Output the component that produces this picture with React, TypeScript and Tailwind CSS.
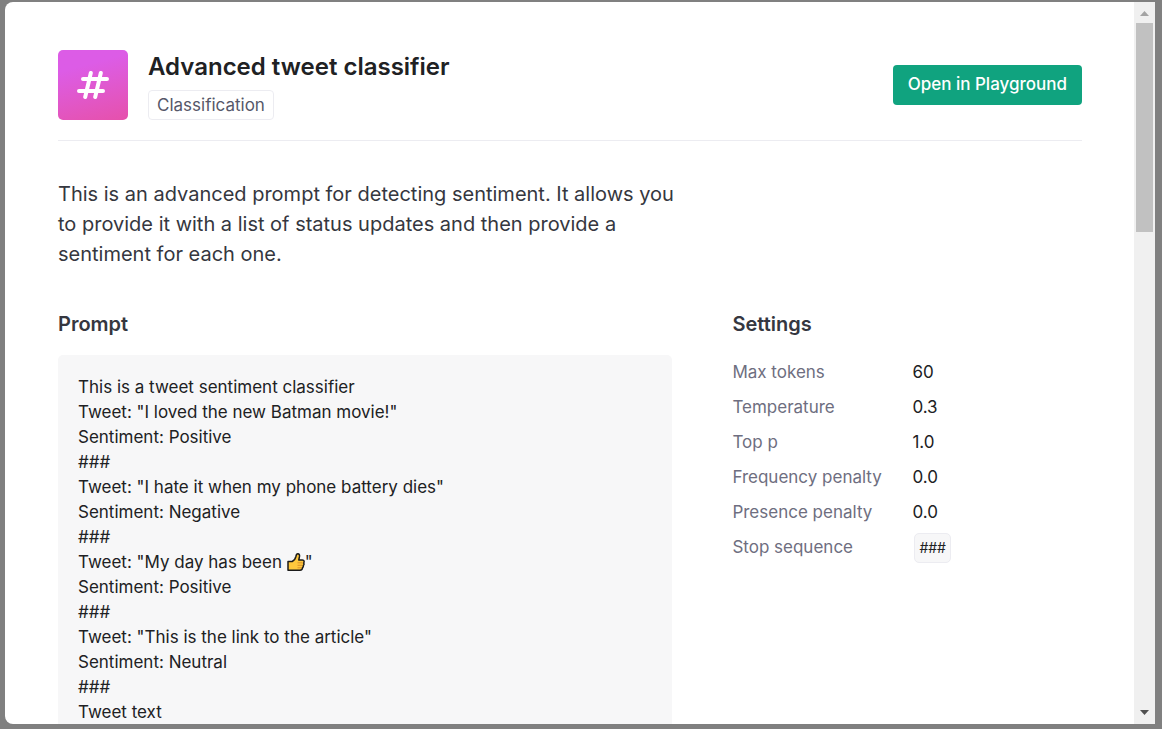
import React from "react";

const promptStart = [
  "This is a tweet sentiment classifier",
  'Tweet: "I loved the new Batman movie!"',
  "Sentiment: Positive",
  "###",
  'Tweet: "I hate it when my phone battery dies"',
  "Sentiment: Negative",
  "###",
];

const promptEnd = [
  "Sentiment: Positive",
  "###",
  'Tweet: "This is the link to the article"',
  "Sentiment: Neutral",
  "###",
  "Tweet text",
];

const settings = [
  ["Max tokens", "60"],
  ["Temperature", "0.3"],
  ["Top p", "1.0"],
  ["Frequency penalty", "0.0"],
  ["Presence penalty", "0.0"],
];

function HashIcon() {
  return (
    <svg viewBox="0 0 32 28" className="h-7 w-8" fill="none" stroke="#fff" strokeWidth="4" strokeLinecap="round" aria-hidden="true">
      <path d="M6 8H30M2 20H26M13.8 2L8.2 26M23.8 2L18.2 26" />
    </svg>
  );
}

function ThumbsUp() {
  return (
    <svg viewBox="0 0 18 18" className="inline size-[18px] align-[-3px]" role="img" aria-label="thumbs up">
      <path
        d="M1 8.5H5.2C7.2 7.4 8.6 5.5 9 3.2C9.2 1.6 9.8.8 10.9.8C12.3.8 12.7 2 12.5 3.4L11.8 7H15.3C16.5 7 17.2 7.8 17.1 8.8C17.1 9.4 16.9 9.8 16.6 10C17 10.4 17.1 11 16.9 11.6C16.8 12 16.5 12.3 16.2 12.5C16.5 13.5 16.2 14.2 15.5 14.6C15.5 16.2 14.6 17.2 13 17.2H1Z"
        fill="#ffc83d"
        stroke="#1b1b1b"
        strokeWidth="1.5"
        strokeLinejoin="round"
      />
      <path d="M10.5 9.8H15.5M10.5 12.3H15.3M10.5 14.8H14.5" stroke="#d9912b" strokeWidth="1" />
    </svg>
  );
}

function ScrollRail() {
  return (
    <div className="flex w-[21px] shrink-0 flex-col items-center bg-[#f0f0f0]" aria-hidden="true">
      <div className="flex h-[21px] shrink-0 items-center justify-center pt-0.5">
        <svg viewBox="0 0 9 5" className="h-[5px] w-[9px]">
          <path d="M0 5L4.5 0L9 5Z" fill="#a3a3a3" />
        </svg>
      </div>
      <div className="w-[17px] flex-1">
        <div className="h-[209px] bg-[#c1c1c1]" />
      </div>
      <div className="flex h-[21px] shrink-0 items-center justify-center pb-0.5">
        <svg viewBox="0 0 9 5" className="h-[5px] w-[9px]">
          <path d="M0 0L4.5 5L9 0Z" fill="#505050" />
        </svg>
      </div>
    </div>
  );
}

export default function App() {
  return (
    <div className="flex h-screen bg-[#808080] pt-0.5 pr-[7px] pb-[5px] pl-[5px] font-['Inter','Liberation_Sans',sans-serif] text-[#202123]">
      <div className="flex min-w-0 flex-1 overflow-hidden rounded-l-lg bg-white">
        <main className="min-w-0 flex-1 overflow-hidden pt-12 pr-[52px] pl-[53px]">
          <header className="flex items-center gap-5 border-b border-[#ececf1] pb-5">
            <div className="flex size-[70px] shrink-0 items-center justify-center rounded-[5px] bg-linear-165 from-[#dc5ce6] from-25% to-[#e650ab]">
              <HashIcon />
            </div>
            <div className="flex flex-1 flex-col items-start gap-1.5">
              <h1 className="text-2xl leading-[34px] font-semibold">Advanced tweet classifier</h1>
              <span className="rounded border border-[#ececf1] px-2 text-[17px] leading-7 text-[#565869]">Classification</span>
            </div>
            <button type="button" className="h-10 rounded bg-[#10a37f] px-[15px] text-[17px] font-medium text-white">
              Open in Playground
            </button>
          </header>

          <p className="max-w-[628px] pt-[38px] text-xl leading-[30px] text-[#353740]">
            This is an advanced prompt for detecting sentiment. It allows you to provide it with a list of status
            updates and then provide a sentiment for each one.
          </p>

          <div className="grid grid-cols-[3fr_2fr] pt-10">
            <section>
              <h2 className="pb-4 text-xl leading-[30px] font-semibold text-[#353740]">Prompt</h2>
              <div className="rounded-[5px] bg-[#f7f7f8] p-5 text-[17px] leading-[25px]">
                {promptStart.map((line, i) => (
                  <p key={i}>{line}</p>
                ))}
                <p>
                  Tweet: "My day has been <ThumbsUp />"
                </p>
                {promptEnd.map((line, i) => (
                  <p key={i}>{line}</p>
                ))}
              </div>
            </section>
            <section className="pl-[60px]">
              <h2 className="pb-4 text-xl leading-[30px] font-semibold text-[#353740]">Settings</h2>
              <dl className="grid grid-cols-[180px_1fr] text-[17px] leading-[35px]">
                {settings.map(([name, value]) => (
                  <React.Fragment key={name}>
                    <dt className="text-[#6e6e80]">{name}</dt>
                    <dd>{value}</dd>
                  </React.Fragment>
                ))}
                <dt className="text-[#6e6e80]">Stop sequence</dt>
                <dd className="flex items-center pl-0.5">
                  <code className="rounded-[5px] border border-[#ececf1] bg-[#f7f7f8] px-1 font-['Inter','Liberation_Sans',sans-serif] text-sm leading-7">###</code>
                </dd>
              </dl>
            </section>
          </div>
        </main>
        <ScrollRail />
      </div>
    </div>
  );
}
